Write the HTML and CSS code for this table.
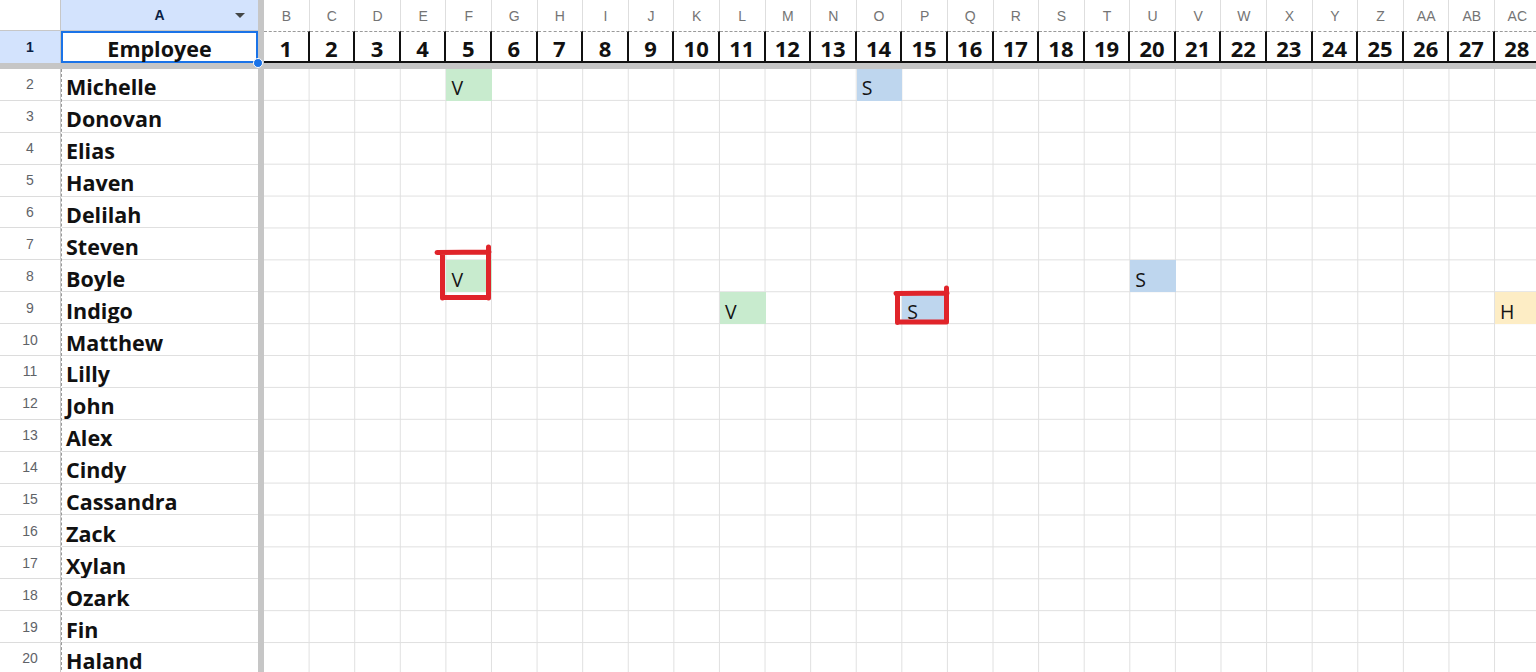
FILE: index.html
```html
<!DOCTYPE html>
<html lang="en">
<head>
<meta charset="utf-8">
<title>Employee schedule</title>
<link rel="stylesheet" href="styles.css">
</head>
<body>
<div class="sheet">
  <div class="corner"></div>
  <div class="colhead colhead-sel"><span class="col-letter">A</span><span class="caret"></span></div>
  <div class="vfreeze"></div>
  <div class="colheads">
    <div class="colhead">B</div><div class="colhead">C</div><div class="colhead">D</div><div class="colhead">E</div>
    <div class="colhead">F</div><div class="colhead">G</div><div class="colhead">H</div><div class="colhead">I</div>
    <div class="colhead">J</div><div class="colhead">K</div><div class="colhead">L</div><div class="colhead">M</div>
    <div class="colhead">N</div><div class="colhead">O</div><div class="colhead">P</div><div class="colhead">Q</div>
    <div class="colhead">R</div><div class="colhead">S</div><div class="colhead">T</div><div class="colhead">U</div>
    <div class="colhead">V</div><div class="colhead">W</div><div class="colhead">X</div><div class="colhead">Y</div>
    <div class="colhead">Z</div><div class="colhead">AA</div><div class="colhead">AB</div><div class="colhead">AC</div>
  </div>

  <div class="rowhead rowhead-sel">1</div>
  <div class="title-cell">Employee<span class="handle"></span></div>
  <div class="days">
    <div class="day">1</div><div class="day">2</div><div class="day">3</div><div class="day">4</div>
    <div class="day">5</div><div class="day">6</div><div class="day">7</div><div class="day">8</div>
    <div class="day">9</div><div class="day">10</div><div class="day">11</div><div class="day">12</div>
    <div class="day">13</div><div class="day">14</div><div class="day">15</div><div class="day">16</div>
    <div class="day">17</div><div class="day">18</div><div class="day">19</div><div class="day">20</div>
    <div class="day">21</div><div class="day">22</div><div class="day">23</div><div class="day">24</div>
    <div class="day">25</div><div class="day">26</div><div class="day">27</div><div class="day">28</div>
  </div>

  <div class="hfreeze"></div>

  <div class="rowheads">
    <div class="rowhead">2</div><div class="rowhead">3</div><div class="rowhead">4</div><div class="rowhead">5</div>
    <div class="rowhead">6</div><div class="rowhead">7</div><div class="rowhead">8</div><div class="rowhead">9</div>
    <div class="rowhead">10</div><div class="rowhead">11</div><div class="rowhead">12</div><div class="rowhead">13</div>
    <div class="rowhead">14</div><div class="rowhead">15</div><div class="rowhead">16</div><div class="rowhead">17</div>
    <div class="rowhead">18</div><div class="rowhead">19</div><div class="rowhead">20</div>
  </div>

  <div class="names">
    <div class="name">Michelle</div><div class="name">Donovan</div><div class="name">Elias</div>
    <div class="name">Haven</div><div class="name">Delilah</div><div class="name">Steven</div>
    <div class="name">Boyle</div><div class="name">Indigo</div><div class="name">Matthew</div>
    <div class="name">Lilly</div><div class="name">John</div><div class="name">Alex</div>
    <div class="name">Cindy</div><div class="name">Cassandra</div><div class="name">Zack</div>
    <div class="name">Xylan</div><div class="name">Ozark</div><div class="name">Fin</div>
    <div class="name">Haland</div>
  </div>

  <div class="data">
    <div class="mark mark-v" style="grid-area: 1 / 5">V</div>
    <div class="mark mark-s" style="grid-area: 1 / 14">S</div>
    <div class="mark mark-v" style="grid-area: 7 / 5">V</div>
    <div class="mark mark-s" style="grid-area: 7 / 20">S</div>
    <div class="mark mark-v" style="grid-area: 8 / 11">V</div>
    <div class="mark mark-s" style="grid-area: 8 / 15">S</div>
    <div class="mark mark-h" style="grid-area: 8 / 28">H</div>
  </div>

  <svg class="annotations" width="1536" height="672" viewBox="0 0 1536 672" aria-hidden="true">
    <g fill="none" stroke="#e0242a" stroke-width="5" stroke-linecap="round" stroke-linejoin="round">
      <path d="M437 252.5 L489 252 M488.5 247 L488.5 298 M442.5 252.5 L442.5 298 M442.5 297.5 L488.5 297.5"/>
      <path d="M896 293.5 L947 293 M946.5 288 L946.5 322 M897.5 293.5 L897.5 322.5 M897.5 322 L946.5 322"/>
    </g>
  </svg>
</div>
</body>
</html>
```

FILE: styles.css
```css
* {
  box-sizing: border-box;
}

html, body {
  margin: 0;
  padding: 0;
  background: #ffffff;
  overflow: hidden;
}

.sheet {
  position: relative;
  display: grid;
  grid-template-columns: 61px 197px 6px 1276.8px;
  grid-template-rows: 31px 32px 6px 606.1px;
  width: max-content;
  font-family: "Liberation Sans", Arial, sans-serif;
  color: #1f1f1f;
}

/* frozen pane bars */
.vfreeze {
  grid-column: 3;
  grid-row: 1 / -1;
  background: #c6c6c6;
}

.hfreeze {
  grid-column: 1 / -1;
  grid-row: 3;
  background: #c6c6c6;
}

/* column headers */
.corner {
  background: #ffffff;
  border-right: 1px solid #c7c7c7;
  border-bottom: 1px solid #c7c7c7;
}

.colheads {
  display: grid;
  grid-template-columns: repeat(28, 45.6px);
}

.colhead {
  display: flex;
  align-items: center;
  justify-content: center;
  font-size: 14px;
  line-height: 1;
  color: #747474;
  border-right: 1px solid #dedede;
  background: #ffffff;
}

.colhead-sel {
  position: relative;
  background: #d3e3fd;
  border-right: none;
  border-bottom: 1px solid #c7c7c7;
}

.col-letter {
  font-weight: bold;
  color: #0a1f44;
}

.caret {
  position: absolute;
  right: 13px;
  top: 13px;
  width: 0;
  height: 0;
  border-left: 5px solid transparent;
  border-right: 5px solid transparent;
  border-top: 5px solid #444746;
}

/* row headers */
.rowheads {
  display: grid;
  grid-auto-rows: 31.9px;
}

.rowhead {
  display: flex;
  align-items: center;
  justify-content: center;
  font-size: 14px;
  line-height: 1;
  color: #5f6368;
  border-right: 1px solid #c7c7c7;
  border-bottom: 1px solid #dcdcdc;
  background: #ffffff;
}

.rowhead-sel {
  background: #d3e3fd;
  font-weight: bold;
  color: #0a1f44;
  border-bottom: none;
}

/* header row 1 */
.title-cell {
  position: relative;
  display: flex;
  align-items: flex-end;
  justify-content: center;
  padding-bottom: 2px;
  font-family: "Open Sans", "Liberation Sans", sans-serif;
  font-weight: 700;
  font-size: 21.5px;
  line-height: 1;
  color: #111111;
  border: 2px solid #1a73e8;
  background: #ffffff;
}

.handle {
  position: absolute;
  right: -7px;
  bottom: -7px;
  width: 10px;
  height: 10px;
  border-radius: 50%;
  background: #1a73e8;
  border: 1px solid #ffffff;
  z-index: 2;
}

.days {
  display: grid;
  grid-template-columns: repeat(28, 45.6px);
}

.day {
  display: flex;
  align-items: flex-end;
  justify-content: center;
  padding-bottom: 2px;
  font-family: "Open Sans", "Liberation Sans", sans-serif;
  font-weight: 700;
  font-size: 22px;
  line-height: 1;
  color: #111111;
  border-top: 1px dashed #9a9a9a;
  border-right: 2px solid #111111;
  border-bottom: 2px solid #111111;
}

/* names column */
.names {
  display: grid;
  grid-auto-rows: 31.9px;
  border-left: 1px dashed #9a9a9a;
}

.name {
  display: flex;
  align-items: flex-end;
  padding: 0 0 2px 4px;
  font-family: "Open Sans", "Liberation Sans", sans-serif;
  font-weight: 700;
  font-size: 21.5px;
  line-height: 1;
  color: #111111;
  border-bottom: 1px solid #e0e0e0;
  white-space: nowrap;
  overflow: hidden;
}

/* data area */
.data {
  display: grid;
  grid-template-columns: repeat(28, 45.6px);
  grid-template-rows: repeat(19, 31.9px);
  background-image:
    linear-gradient(to left, #e0e0e0 1px, transparent 1px),
    linear-gradient(to top, #e0e0e0 1px, transparent 1px);
  background-size: 45.6px 31.9px;
}

.mark {
  display: flex;
  align-items: flex-end;
  padding: 0 0 3px 5px;
  font-family: "Open Sans", "Liberation Sans", sans-serif;
  font-size: 19.5px;
  line-height: 1;
  color: #141414;
}

.mark-v {
  background: #c8ebce;
}

.mark-s {
  background: #bed6ee;
}

.mark-h {
  background: #fdedc5;
}

/* hand-drawn highlight boxes */
.annotations {
  position: absolute;
  left: 0;
  top: 0;
  pointer-events: none;
  z-index: 3;
}
```
